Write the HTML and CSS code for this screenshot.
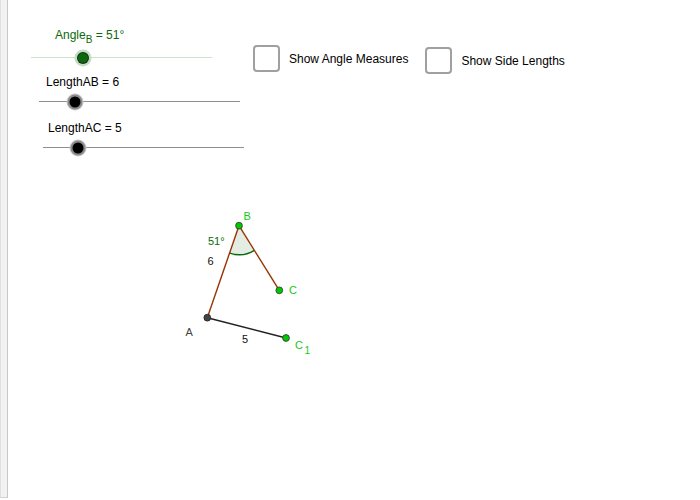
FILE: index.html
```html
<!DOCTYPE html>
<html>
<head>
<meta charset="utf-8">
<link rel="stylesheet" href="styles.css">
</head>
<body>
<div class="app">
  <div class="sidebar"></div>
  <div class="canvas">
    <svg class="diagram" width="692" height="500" viewBox="8 0 692 500" xmlns="http://www.w3.org/2000/svg">
      <path d="M239,225.7 L229.55,253.1 A29,29 0 0,0 254.36,250.3 Z" fill="#e4ede4" stroke="none"/>
      <path d="M229.55,253.1 A29,29 0 0,0 254.36,250.3" fill="none" stroke="#0a6a0a" stroke-width="1.5"/>
      <line x1="207.3" y1="317.7" x2="239" y2="225.7" stroke="#993300" stroke-width="1.4"/>
      <line x1="239" y1="225.7" x2="279.3" y2="290.3" stroke="#993300" stroke-width="1.4"/>
      <line x1="207.3" y1="317.7" x2="286" y2="338" stroke="#222" stroke-width="1.4"/>
      <circle cx="239" cy="225.7" r="3.4" fill="#00c800" stroke="#333" stroke-width="0.8"/>
      <circle cx="279.3" cy="290.3" r="3.4" fill="#00c800" stroke="#333" stroke-width="0.8"/>
      <circle cx="286" cy="338" r="3.4" fill="#00c800" stroke="#333" stroke-width="0.8"/>
      <circle cx="207.3" cy="317.7" r="3.4" fill="#444" stroke="#222" stroke-width="0.8"/>
      <text class="lbl pt" x="243.5" y="219.5">B</text>
      <text class="lbl ang" x="208" y="245">51°</text>
      <text class="lbl num" x="207.5" y="264.5">6</text>
      <text class="lbl pt" x="289" y="293.5">C</text>
      <text class="lbl vtx" x="185.5" y="336">A</text>
      <text class="lbl num" x="242" y="343">5</text>
      <text class="lbl pt" x="295" y="348.5">C</text>
      <text class="lbl pt small" x="304.5" y="353.5">1</text>
    </svg>
    <div class="controls">
      <div class="sliders">
        <div class="slider slider-angle">
          <div class="label green">Angle<span class="sub">B</span> = 51°</div>
          <div class="track track-green"><span class="knob knob-green"></span></div>
        </div>
        <div class="slider slider-ab">
          <div class="label">LengthAB = 6</div>
          <div class="track"><span class="knob knob-black"></span></div>
        </div>
        <div class="slider slider-ac">
          <div class="label">LengthAC = 5</div>
          <div class="track"><span class="knob knob-black"></span></div>
        </div>
      </div>
      <label class="check check-angle"><span class="box"></span><span>Show Angle Measures</span></label>
      <label class="check check-side"><span class="box"></span><span>Show Side Lengths</span></label>
    </div>
  </div>
</div>
</body>
</html>
```
FILE: styles.css
```css
html, body {
  margin: 0;
  padding: 0;
  background: #fff;
}
body {
  font-family: "Liberation Sans", Arial, sans-serif;
  color: #000;
}
.app {
  display: flex;
  width: 700px;
  height: 500px;
  overflow: hidden;
}
.sidebar {
  width: 6px;
  height: 497px;
  background: #f2f2f2;
  border-left: 1px solid #e0e0e0;
  border-right: 1px solid #c8c8c8;
  border-bottom: 1px solid #d0d0d0;
  flex: none;
}
.canvas {
  position: relative;
  flex: 1;
  height: 500px;
}
.diagram {
  position: absolute;
  left: 0;
  top: 0;
}
.lbl {
  font-family: "Liberation Sans", Arial, sans-serif;
  font-size: 11px;
}
.lbl.pt { fill: #14c814; }
.lbl.small { font-size: 10px; }
.lbl.ang { fill: #0a6a0a; }
.lbl.num { fill: #111; }
.lbl.vtx { fill: #444; }

.controls {
  position: relative;
  display: flex;
  align-items: flex-start;
}
.sliders {
  width: 236px;
  padding-top: 28px;
  display: flex;
  flex-direction: column;
  flex: none;
}
.slider {
  display: flex;
  flex-direction: column;
  gap: 2px;
}
.label {
  font-size: 12px;
  line-height: 14px;
  white-space: nowrap;
}
.label.green { color: #0a6a0a; }
.sub {
  font-size: 10px;
  position: relative;
  top: 4px;
  line-height: 0;
}
.slider-angle {
  margin-left: 23px;
  gap: 5px;
}
.slider-angle .label { padding-left: 24px; }
.slider-angle .track { width: 181px; }
.slider-ab {
  margin-left: 31px;
  margin-top: 8px;
}
.slider-ab .label { padding-left: 7px; }
.slider-ab .track { width: 201px; }
.slider-ac {
  margin-left: 35px;
  margin-top: 10px;
}
.slider-ac .label { padding-left: 5px; }
.slider-ac .track { width: 201px; }

.track {
  position: relative;
  height: 20px;
}
.track::before {
  content: "";
  position: absolute;
  left: 0;
  right: 0;
  top: 10px;
  height: 1px;
  background: #8e8e8e;
}
.track-green::before {
  background: #cfe0cf;
}
.knob {
  position: absolute;
  top: 10.5px;
  border-radius: 50%;
  transform: translate(-50%, -50%);
}
.knob-green {
  left: 51.5px;
  width: 10px;
  height: 10px;
  background: #0a6a0a;
  box-shadow: 0 0 0 1px #1a2a1a, 0 0 0 3.5px #c3dcc3;
}
.slider-ab .knob { left: 35.5px; }
.slider-ac .knob { left: 34.5px; }
.knob-black {
  width: 11px;
  height: 11px;
  background: #000;
  box-shadow: 0 0 0 2px #8a8a8a, 0 0 0 3px #c8c8c8;
}

.check {
  display: flex;
  align-items: center;
  gap: 9px;
  font-size: 12px;
  white-space: nowrap;
  color: #000;
}
.box {
  width: 27px;
  height: 27px;
  box-sizing: border-box;
  border: 2px solid #a0a0a0;
  border-radius: 4px;
  background: #fff;
  flex: none;
}
.check-angle {
  margin-left: 9px;
  margin-top: 45px;
}
.check-side {
  margin-left: 17px;
  margin-top: 47px;
}
```
